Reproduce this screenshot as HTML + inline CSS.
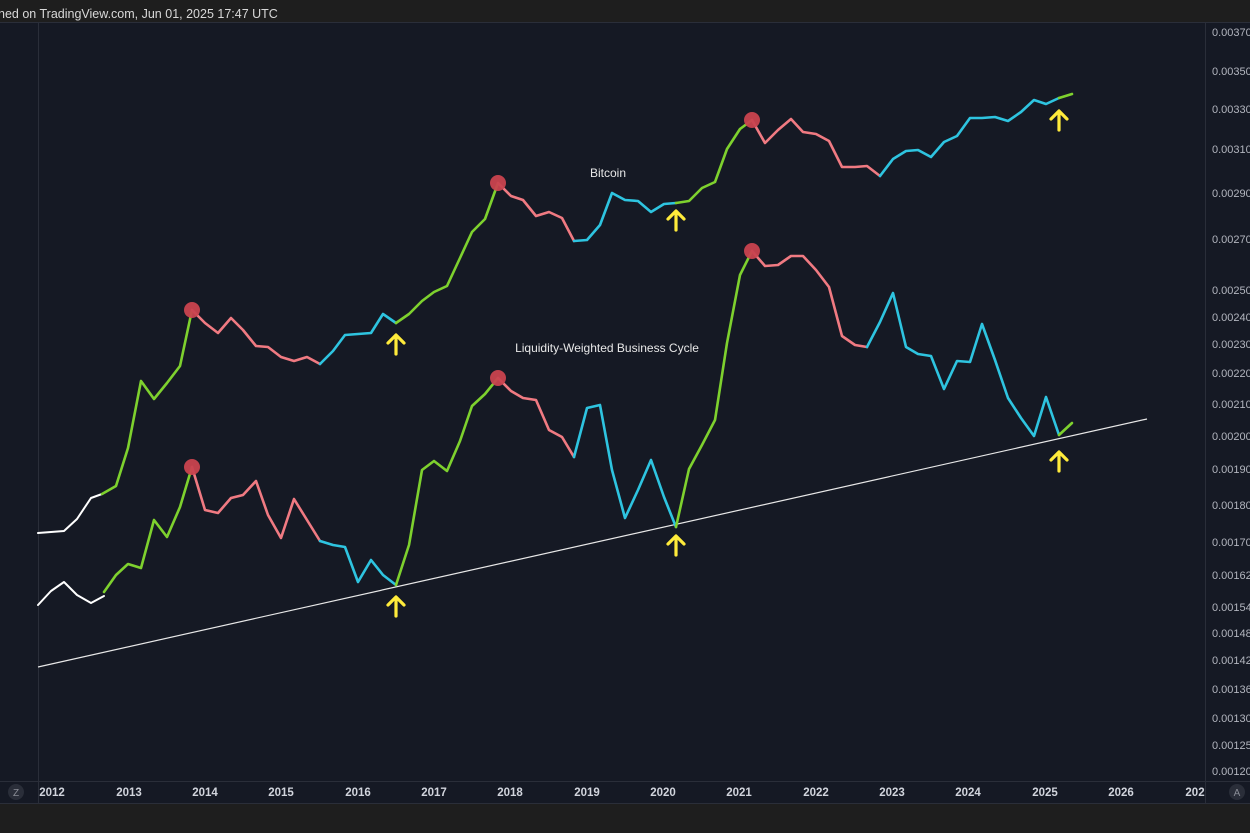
<!DOCTYPE html>
<html><head><meta charset="utf-8"><style>
html,body{margin:0;padding:0;background:#1e1e1e;width:1250px;height:833px;overflow:hidden;font-family:"Liberation Sans",sans-serif}
</style></head><body>
<svg width="1250" height="833" xmlns="http://www.w3.org/2000/svg" style="position:absolute;left:0;top:0">
<rect x="0" y="0" width="1250" height="833" fill="#1e1e1e"/>
<rect x="0" y="22" width="1250" height="781" fill="#151924"/>
<line x1="0" y1="22.5" x2="1250" y2="22.5" stroke="#2a2e39"/>
<line x1="38.5" y1="22" x2="38.5" y2="803" stroke="#2a2e39"/>
<line x1="1205.5" y1="22" x2="1205.5" y2="803" stroke="#2a2e39"/>
<line x1="0" y1="781.5" x2="1250" y2="781.5" stroke="#2a2e39"/>
<line x1="0" y1="803.5" x2="1250" y2="803.5" stroke="#2a2e39"/>
<text x="-2" y="18" fill="#d8d8d8" font-size="12.5">hed on TradingView.com, Jun 01, 2025 17:47 UTC</text>
<g fill="#b2b5be" font-size="11">
<text x="1212" y="36">0.00370</text><text x="1212" y="75">0.00350</text><text x="1212" y="113">0.00330</text><text x="1212" y="153">0.00310</text><text x="1212" y="197">0.00290</text><text x="1212" y="243">0.00270</text><text x="1212" y="294">0.00250</text><text x="1212" y="321">0.00240</text><text x="1212" y="348">0.00230</text><text x="1212" y="377">0.00220</text><text x="1212" y="408">0.00210</text><text x="1212" y="440">0.00200</text><text x="1212" y="473">0.00190</text><text x="1212" y="509">0.00180</text><text x="1212" y="546">0.00170</text><text x="1212" y="579">0.00162</text><text x="1212" y="611">0.00154</text><text x="1212" y="637">0.00148</text><text x="1212" y="664">0.00142</text><text x="1212" y="693">0.00136</text><text x="1212" y="722">0.00130</text><text x="1212" y="749">0.00125</text><text x="1212" y="775">0.00120</text>
</g>
<g fill="#d1d4dc" font-size="11.5" font-weight="bold" text-anchor="middle">
<text x="52" y="796">2012</text><text x="129" y="796">2013</text><text x="205" y="796">2014</text><text x="281" y="796">2015</text><text x="358" y="796">2016</text><text x="434" y="796">2017</text><text x="510" y="796">2018</text><text x="587" y="796">2019</text><text x="663" y="796">2020</text><text x="739" y="796">2021</text><text x="816" y="796">2022</text><text x="892" y="796">2023</text><text x="968" y="796">2024</text><text x="1045" y="796">2025</text><text x="1121" y="796">2026</text><text x="1195" y="796">202</text>
</g>
<circle cx="16" cy="792" r="8" fill="#2a2e39"/><text x="16" y="796" fill="#8a8d96" font-size="10" text-anchor="middle">Z</text>
<circle cx="1237" cy="792" r="8" fill="#2a2e39"/><text x="1237" y="796" fill="#8a8d96" font-size="10" text-anchor="middle">A</text>
<line x1="38" y1="667" x2="1147" y2="419" stroke="#e8e8e8" stroke-width="1.2"/>
<g fill="none" stroke-width="2.6" stroke-linejoin="round" stroke-linecap="round">
<polyline stroke="#ffffff" stroke-width="2" points="38,533 64,531 77,519 91,498 102,494"/>
<polyline stroke="#7ed12e" points="102,494 116,486 128,448 141,381 154,399 167,383 180,366 192,310"/>
<polyline stroke="#f07a82" points="192,310 205,323 218,333 231,318 243,330 256,346 268,347 281,357 294,361 307,357 320,364"/>
<polyline stroke="#2ec4e0" points="320,364 333,351 345,335 358,334 371,333 383,314 396,323"/>
<polyline stroke="#7ed12e" points="396,323 409,314 422,301 434,292 447,286 460,258 472,232 485,219 498,183"/>
<polyline stroke="#f07a82" points="498,183 511,196 523,200 536,216 549,212 562,218 574,241"/>
<polyline stroke="#2ec4e0" points="574,241 587,240 600,225 612,193 625,200 638,201 651,212 664,204 676,203"/>
<polyline stroke="#7ed12e" points="676,203 689,201 702,188 715,182 727,149 740,129 752,120"/>
<polyline stroke="#f07a82" points="752,120 765,143 778,130 791,119 803,132 816,134 829,141 842,167 855,167 867,166 880,176"/>
<polyline stroke="#2ec4e0" points="880,176 893,159 906,151 918,150 931,157 944,142 957,136 970,118 982,118 995,117 1008,121 1021,112 1034,100 1046,104 1059,98"/>
<polyline stroke="#7ed12e" points="1059,98 1072,94"/>
<polyline stroke="#ffffff" stroke-width="2" points="38,605 51,591 64,582 77,595 91,603 104,596"/>
<polyline stroke="#7ed12e" points="104,592 116,575 128,564 141,568 154,520 167,537 180,507 192,467"/>
<polyline stroke="#f07a82" points="192,467 205,510 218,513 231,498 243,495 256,481 268,515 281,538 294,499 307,520 320,541"/>
<polyline stroke="#2ec4e0" points="320,541 333,545 345,547 358,582 371,560 383,575 396,585"/>
<polyline stroke="#7ed12e" points="396,585 409,545 422,470 434,461 447,471 460,441 472,406 485,394 498,378"/>
<polyline stroke="#f07a82" points="498,378 511,391 523,398 536,400 549,430 562,437 574,457"/>
<polyline stroke="#2ec4e0" points="574,457 587,408 600,405 612,470 625,518 638,490 651,460 664,497 676,527"/>
<polyline stroke="#7ed12e" points="676,527 689,469 702,445 715,420 727,343 740,275 752,251"/>
<polyline stroke="#f07a82" points="752,251 765,266 778,265 791,256 803,256 816,270 829,287 842,336 855,345 867,347"/>
<polyline stroke="#2ec4e0" points="867,347 880,322 893,293 906,347 918,354 931,356 944,389 957,361 970,362 982,324 995,360 1008,398 1021,418 1034,436 1046,397 1059,435"/>
<polyline stroke="#7ed12e" points="1059,435 1072,423"/>
</g>
<g fill="#c9434f" opacity="0.95">
<circle cx="192" cy="310" r="8"/><circle cx="498" cy="183" r="8"/><circle cx="752" cy="120" r="8"/>
<circle cx="192" cy="467" r="8"/><circle cx="498" cy="378" r="8"/><circle cx="752" cy="251" r="8"/>
</g>
<g fill="none" stroke="#ffeb3b" stroke-width="3.2" stroke-linecap="round" stroke-linejoin="round">
<path d="M396 336v18M388 343l8-8 8 8"/>
<path d="M396 598v18M388 605l8-8 8 8"/>
<path d="M676 212v18M668 219l8-8 8 8"/>
<path d="M676 537v18M668 544l8-8 8 8"/>
<path d="M1059 112v18M1051 119l8-8 8 8"/>
<path d="M1059 453v18M1051 460l8-8 8 8"/>
</g>
<text x="608" y="177" fill="#e8e8e8" font-size="12" text-anchor="middle">Bitcoin</text>
<text x="607" y="352" fill="#e8e8e8" font-size="12" text-anchor="middle">Liquidity-Weighted Business Cycle</text>
</svg>
</body></html>
